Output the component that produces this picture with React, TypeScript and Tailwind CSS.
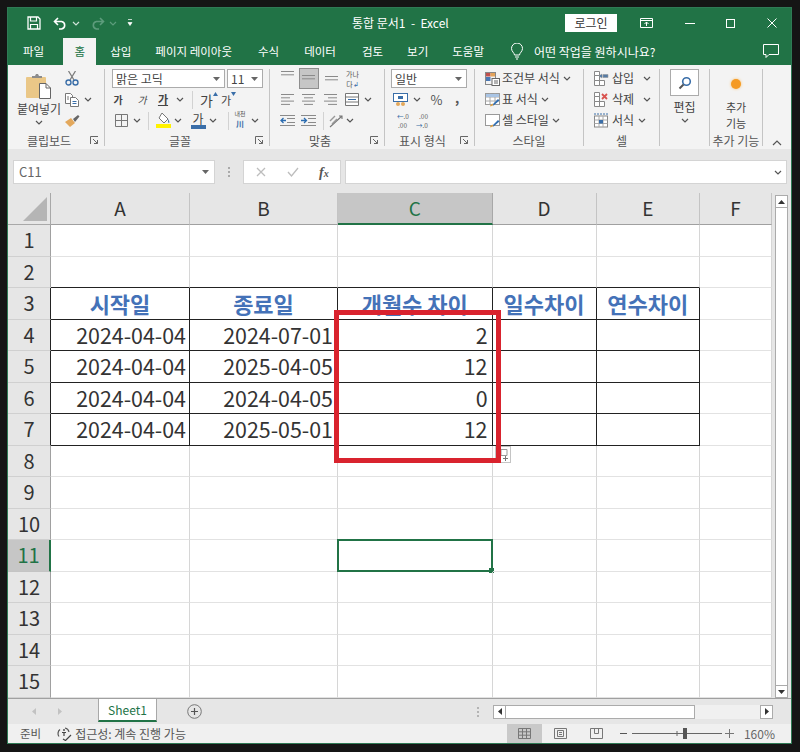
import type { ReactNode } from "react"

const GREEN = "#217346"

function Chev({ className = "", color = "#555" }: { className?: string; color?: string }) {
    return (
        <svg width="8" height="5" viewBox="0 0 8 5" className={`shrink-0 ${className}`}>
            <path d="M1 1l3 3 3-3" fill="none" stroke={color} strokeWidth="1.2" />
        </svg>
    )
}

function Tri({ className = "" }: { className?: string }) {
    return (
        <svg width="7" height="4" viewBox="0 0 7 4" className={`shrink-0 ${className}`}>
            <path d="M0 0h7L3.5 4z" fill="#666" />
        </svg>
    )
}

function Launcher() {
    return (
        <svg width="9" height="9" viewBox="0 0 9 9" className="shrink-0">
            <path d="M.5 8V.5H8M3 3l4.500 4.500M7.500 4v3.500H4" fill="none" stroke="#666" strokeWidth="1" />
        </svg>
    )
}

function Sep({ className = "" }: { className?: string }) {
    return <div className={`w-px h-[18px] bg-[#d2d2d2] shrink-0 ${className}`} />
}

function Group({ label, launcher, className, children }: { label?: string; launcher?: boolean; className: string; children: ReactNode }) {
    return (
        <>
            <div className={`flex flex-col shrink-0 ${className}`}>
                <div className="h-[63px] flex flex-col">{children}</div>
                <div className="h-[18px] pt-px flex items-center text-[12px] text-[#555]">
                    <span className="flex-1 text-center whitespace-nowrap">{label}</span>
                    {launcher && <span className="w-[14px] flex"><Launcher /></span>}
                </div>
            </div>
            <div className="w-px h-[77px] mt-[1px] bg-[#c4c4c4] shrink-0" />
        </>
    )
}

function Row({ children }: { children: ReactNode }) {
    return <div className="h-[21px] flex items-center shrink-0">{children}</div>
}

function Lines({ rows, className = "" }: { rows: [number, number][]; className?: string }) {
    return (
        <svg width="14" height="11" viewBox="0 0 14 11" className={`shrink-0 ${className}`}>
            {rows.map(([x, w], i) => (
                <rect key={i} x={x} y={i * 3.3} width={w} height="1" fill="#8a8a8a" />
            ))}
        </svg>
    )
}

function Indent({ dir, className = "" }: { dir: "in" | "out"; className?: string }) {
    return (
        <svg width="15" height="11" viewBox="0 0 15 11" className={`shrink-0 ${className}`}>
            <path d="M0 .5h15M0 10.500h15M7 3.500h8M7 7.500h8" stroke="#8a8a8a" strokeWidth="1" />
            {dir === "out"
                ? <path d="M6 5.500H1M3.500 3L1 5.500 3.500 8" fill="none" stroke="#2b6cb0" strokeWidth="1.300" />
                : <path d="M0 5.500h5M3 3l2.500 2.500L3 8" fill="none" stroke="#2b6cb0" strokeWidth="1.300" />}
        </svg>
    )
}

function TableIcon({ kind, className = "" }: { kind: "cond" | "table" | "cell"; className?: string }) {
    return (
        <svg width="15" height="14" viewBox="0 0 15 14" className={`shrink-0 ${className}`}>
            {kind === "cond" ? (
                <>
                    <rect x=".5" y=".5" width="5" height="4" fill="#c0504d" />
                    <rect x=".5" y="5" width="5" height="4" fill="#4a78b5" />
                    <rect x="5.500" y=".5" width="5" height="4" fill="#e3a35a" />
                    <rect x=".5" y=".5" width="10" height="12" fill="none" stroke="#888" />
                    <rect x="7" y="6.500" width="7.500" height="7" fill="#fff" stroke="#666" />
                    <path d="M9 9h4M9 11h4" stroke="#666" />
                </>
            ) : (
                <>
                    <rect x=".5" y=".5" width="14" height="11" fill="#fff" stroke="#999" />
                    {kind === "table" && <path d="M5 .5v11M10 .5v11M.5 4h14M.5 8h14" stroke="#aaa" />}
                    {kind === "table" && <rect x="1" y="1" width="13" height="3" fill="#a9c4e4" />}
                    <path d="M7 12l6-6 1.500 1.500-6 5z" fill="#2f6db0" />
                    <path d="M5 12.500l2.500-2 1 1.500-3 1.500z" fill="#e0a040" />
                </>
            )}
        </svg>
    )
}

function CellIcon({ kind, className = "" }: { kind: "insert" | "delete" | "format"; className?: string }) {
    return (
        <svg width="15" height="15" viewBox="0 0 15 15" className={`shrink-0 ${className}`}>
            {kind === "format" ? (
                <>
                    <rect x=".5" y="3" width="13" height="11" fill="#fff" stroke="#888" />
                    <path d="M5 3v11M9 3v11M.5 7h13M.5 10.500h13" stroke="#aaa" />
                    <rect x="5" y="7" width="4" height="3.500" fill="#3a6ea8" />
                    <path d="M0 1h14" stroke="#3a6ea8" strokeDasharray="2 1" />
                </>
            ) : (
                <>
                    <path d="M.5.5h5v4h-5zM.5 4.500h5v5h-5zM.5 9.500h5v5h-5zM5.500 9.500h5v5h-5z" fill="#fff" stroke="#888" />
                    {kind === "insert"
                        ? <path d="M8 5h6M5 5l3-2v4zM9 3.500h5v3H9z" fill="#3a6ea8" stroke="#9a9a9a" strokeWidth=".6" />
                        : <path d="M8 2l5 5M13 2L8 7" stroke="#d9534f" strokeWidth="1.800" />}
                </>
            )}
        </svg>
    )
}

function SmallIcons() {
    return (
        <div className="flex flex-col ml-[4px]">
            <Row>
                <svg width="14" height="15" viewBox="0 0 14 15" className="shrink-0">
                    <path d="M3.500 0l5.500 9M10.500 0L5 9" stroke="#7d7d7d" strokeWidth="1.300" />
                    <circle cx="3.500" cy="11.500" r="2.500" fill="none" stroke="#3a6ea8" strokeWidth="1.400" />
                    <circle cx="10.500" cy="11.500" r="2.500" fill="none" stroke="#3a6ea8" strokeWidth="1.400" />
                </svg>
            </Row>
            <Row>
                <svg width="14" height="14" viewBox="0 0 14 14" className="shrink-0">
                    <path d="M.5.5h5l2 2v8h-7z" fill="#fff" stroke="#777" />
                    <path d="M5.500 4.500h5l3 3v6h-8z" fill="#fff" stroke="#777" />
                    <path d="M7.500 8.500h4M7.500 10.500h4" stroke="#3a6ea8" />
                    <path d="M2 4h2M2 6h2" stroke="#777" />
                </svg>
                <Chev className="ml-[5px]" />
            </Row>
            <Row>
                <svg width="15" height="14" viewBox="0 0 15 14" className="shrink-0">
                    <path d="M0 8l6-4 4 5-5 4z" fill="#e3a85c" />
                    <path d="M8 5l5-4 1.500 1.500L10 8z" fill="#666" />
                </svg>
            </Row>
        </div>
    )
}

function Paste() {
    return (
        <div className="flex flex-col items-center ml-[9px] w-[44px]">
            <svg width="26" height="26" viewBox="0 0 26 26" className="mt-[5px] shrink-0">
                <rect x="0" y="4" width="20" height="21" rx="1" fill="#eac787" />
                <path d="M6 5V3h3l1-2h2l1 2h3v2z" fill="#8c8c8c" />
                <path d="M13.500 10.500h6.500l4.500 4.500v10.500h-11z" fill="#fff" stroke="#666" />
                <path d="M20 10.500v4.500h4.500" fill="none" stroke="#666" />
            </svg>
            <span className="text-[12px] leading-[14px] mt-[3px] text-[#444] whitespace-nowrap">붙여넣기</span>
            <Chev className="mt-[4px]" />
        </div>
    )
}

function Combo({ text, className }: { text: string; className: string }) {
    return (
        <div className={`h-[19px] bg-white border border-[#ababab] flex items-center pl-[3px] pr-[4px] text-[12px] text-[#444] shrink-0 ${className}`}>
            <span className="flex-1 whitespace-nowrap">{text}</span>
            <Tri />
        </div>
    )
}

function FontGroup() {
    return (
        <Group label="글꼴" launcher className="w-[164px]">
            <Row>
                <Combo text="맑은 고딕" className="ml-[7px] w-[113px]" />
                <Combo text="11" className="ml-[2px] w-[36px]" />
            </Row>
            <Row>
                <span className="w-[24px] ml-px text-center text-[10px] font-bold text-[#444]">가</span>
                <span className="w-[24px] text-center text-[10px] italic text-[#444]">가</span>
                <span className="w-[18px] text-center text-[11px] font-bold text-[#444] underline">가</span>
                <span className="w-[16px] flex justify-center"><Chev /></span>
                <Sep className="ml-[4px]" />
                <div className="w-[28px] flex justify-center items-start shrink-0 pl-[4px]">
                    <span className="text-[14px] leading-none text-[#444]">가</span>
                    <svg width="5" height="4" viewBox="0 0 5 4" className="shrink-0 -mt-[1px]"><path d="M2.500 0L5 4H0z" fill="#3a6ea8" /></svg>
                </div>
                <div className="w-[14px] flex justify-center items-start shrink-0 pl-[1px]">
                    <span className="text-[11px] leading-none text-[#444] mt-[2px]">가</span>
                    <svg width="5" height="4" viewBox="0 0 5 4" className="shrink-0 -mt-[1px]"><path d="M0 0h5L2.500 4z" fill="#3a6ea8" /></svg>
                </div>
            </Row>
            <Row>
                <svg width="13" height="13" viewBox="0 0 13 13" className="shrink-0 ml-[10px]">
                    <path d="M.5.5h12v12H.500zM6.500.5v12M.5 6.500h12" fill="none" stroke="#777" />
                </svg>
                <Chev className="ml-[5px]" />
                <Sep className="ml-[7px]" />
                <div className="w-[16px] ml-[6px] flex flex-col items-center shrink-0">
                    <svg width="13" height="11" viewBox="0 0 13 11">
                        <path d="M5 0l6 6-4 4-5-5z" fill="#fff" stroke="#777" />
                        <path d="M11 6c1 2 2 3 1 4-1 0-1-2-1-4z" fill="#3a6ea8" />
                    </svg>
                    <div className="w-[15px] h-[4px] bg-[#fff200]" />
                </div>
                <Chev className="ml-[3px]" />
                <div className="w-[16px] ml-[8px] flex flex-col items-center shrink-0">
                    <span className="text-[12px] leading-[12px] text-[#444]">가</span>
                    <div className="w-[15px] h-[4px] bg-[#3a6ea8]" />
                </div>
                <Chev className="ml-[3px]" />
                <Sep className="ml-[11px]" />
                <div className="w-[16px] ml-[3px] -mt-[2px] flex flex-col items-center shrink-0 leading-none">
                    <span className="text-[6px] leading-[9px] text-[#555] whitespace-nowrap">내천</span>
                    <span className="text-[8px] leading-[12px] font-bold text-[#3a6ea8]">川</span>
                </div>
                <Chev className="ml-[3px]" />
            </Row>
        </Group>
    )
}

function AlignGroup() {
    return (
        <Group label="맞춤" launcher className="w-[114px]">
            <Row>
                <Lines rows={[[0, 13], [0, 13]]} className="ml-[11px] -mt-[5px]" />
                <div className="w-[20px] h-[21px] ml-[4px] bg-[#c6c6c6] border border-[#8e8e8e] flex items-center justify-center shrink-0">
                    <Lines rows={[[0, 13], [0, 13]]} className="mt-[3px]" />
                </div>
                <Lines rows={[[0, 13], [0, 13]]} className="ml-[6px] mt-[6px]" />
                <div className="ml-[7px] flex flex-col items-center shrink-0 text-[#555]">
                    <span className="text-[7px] leading-[10px]">가나</span>
                    <span className="text-[7px] leading-[10px]">다<span className="text-[#3a6ea8]">↲</span></span>
                </div>
            </Row>
            <Row>
                <Lines rows={[[0, 13], [0, 9], [0, 13], [0, 9]]} className="ml-[11px]" />
                <Lines rows={[[0, 13], [2, 9], [0, 13], [2, 9]]} className="ml-[7px]" />
                <Lines rows={[[0, 13], [4, 9], [0, 13], [4, 9]]} className="ml-[8px]" />
                <svg width="14" height="13" viewBox="0 0 14 13" className="shrink-0 ml-[7px]">
                    <path d="M.5.5h13v12H.500zM.5 4h13M.5 9h13" fill="#fff" stroke="#777" />
                    <path d="M3 6.500h8" stroke="#3a6ea8" />
                </svg>
                <Chev className="ml-[5px]" />
            </Row>
            <Row>
                <Indent dir="out" className="ml-[10px]" />
                <Indent dir="in" className="ml-[6px]" />
                <Sep className="ml-[7px]" />
                <svg width="14" height="14" viewBox="0 0 14 14" className="shrink-0 ml-[5px]">
                    <path d="M1 13L13 2M10 2h3v3" fill="none" stroke="#777" strokeWidth="1.100" />
                    <path d="M1 7l5-5M3 10l5-5" stroke="#999" strokeWidth="1.400" />
                </svg>
                <Chev className="ml-[3px]" />
            </Row>
        </Group>
    )
}

function NumberGroup() {
    return (
        <Group label="표시 형식" launcher className="w-[89px]">
            <Row>
                <Combo text="일반" className="ml-[6px] w-[76px]" />
            </Row>
            <Row>
                <svg width="15" height="14" viewBox="0 0 15 14" className="shrink-0 ml-[8px]">
                    <rect x=".5" y=".5" width="14" height="8" fill="#fff" stroke="#3a6ea8" />
                    <rect x="5" y="3" width="5" height="3" fill="#3a6ea8" />
                    <circle cx="5" cy="11" r="2" fill="#e3a85c" />
                    <circle cx="10" cy="11" r="2" fill="#e3a85c" />
                </svg>
                <Chev className="ml-[5px]" />
                <span className="ml-[9px] w-[13px] text-[13px] leading-none text-[#555] text-center">%</span>
                <span className="ml-[10px] w-[8px] text-[13px] leading-none font-bold text-[#555] text-center -mt-[4px]">,</span>
            </Row>
            <Row>
                <div className="ml-[12px] flex flex-col text-[6.5px] leading-[9px] text-[#666] shrink-0 w-[12px]">
                    <span className="whitespace-nowrap"><span className="text-[#3a6ea8]">←</span>.0</span>
                    <span className="pl-[1px]">.00</span>
                </div>
                <div className="ml-[7px] flex flex-col text-[6.5px] leading-[9px] text-[#666] shrink-0 w-[13px]">
                    <span className="pl-[3px]">.00</span>
                    <span className="whitespace-nowrap"><span className="text-[#3a6ea8]">→</span>.0</span>
                </div>
            </Row>
        </Group>
    )
}

function StyleGroup() {
    const items: { kind: "cond" | "table" | "cell"; text: string }[] = [
        { kind: "cond", text: "조건부 서식" },
        { kind: "table", text: "표 서식" },
        { kind: "cell", text: "셀 스타일" },
    ]
    return (
        <Group label="스타일" className="w-[108px]">
            {items.map((it) => (
                <Row key={it.text}>
                    <TableIcon kind={it.kind} className="ml-[10px]" />
                    <span className="ml-[2px] -mt-px text-[12px] text-[#444] whitespace-nowrap">{it.text}</span>
                    <Chev className="ml-[3px]" />
                </Row>
            ))}
        </Group>
    )
}

function CellGroup() {
    return (
        <Group label="셀" className="w-[75px]">
            <Row>
                <CellIcon kind="insert" className="ml-[10px]" />
                <span className="ml-[3px] -mt-px text-[12px] text-[#444] whitespace-nowrap">삽입</span>
                <Chev className="ml-[9px]" />
            </Row>
            <Row>
                <CellIcon kind="delete" className="ml-[10px]" />
                <span className="ml-[3px] -mt-px text-[12px] text-[#444] whitespace-nowrap">삭제</span>
                <Chev className="ml-[9px]" />
            </Row>
            <Row>
                <CellIcon kind="format" className="ml-[10px]" />
                <span className="ml-[3px] -mt-px text-[12px] text-[#444] whitespace-nowrap">서식</span>
                <Chev className="ml-[4px]" />
            </Row>
        </Group>
    )
}

function Ribbon() {
    return (
        <div className="h-[84px] bg-[#f3f3f3] flex pt-[3px] shrink-0">
            <Group label="클립보드" launcher className="w-[96px]">
                <div className="flex">
                    <Paste />
                    <SmallIcons />
                </div>
            </Group>
            <FontGroup />
            <AlignGroup />
            <NumberGroup />
            <StyleGroup />
            <CellGroup />
            <Group className="w-[49px]">
                <div className="flex flex-col items-center">
                    <div className="w-[29px] h-[27px] mt-[1px] bg-white border border-[#ababab] flex items-center justify-center">
                        <svg width="14" height="14" viewBox="0 0 14 14">
                            <circle cx="8.500" cy="5.500" r="3.800" fill="none" stroke="#3a6ea8" strokeWidth="1.600" />
                            <path d="M5.500 8.500L1.500 12.500" stroke="#555" strokeWidth="2" />
                        </svg>
                    </div>
                    <span className="text-[12px] leading-[14px] mt-[4px] text-[#444]">편집</span>
                    <Chev className="mt-[4px]" />
                </div>
            </Group>
            <Group label="추가 기능" className="w-[52px]">
                <div className="flex flex-col items-center text-[11px] leading-[16px] text-[#444]">
                    <div className="w-[10px] h-[10px] mt-[11px] rounded-full bg-[#f59a23] shadow-[0_0_3px_#f8c070]" />
                    <span className="mt-[10px]">추가</span>
                    <span>기능</span>
                </div>
            </Group>
            <div className="flex-1 flex items-end justify-center pb-[3px]">
                <svg width="10" height="6" viewBox="0 0 10 6">
                    <path d="M1 5l4-4 4 4" fill="none" stroke="#555" strokeWidth="1.200" />
                </svg>
            </div>
        </div>
    )
}

function TitleBar() {
    return (
        <div className="h-[30px] flex items-center text-white shrink-0" style={{ backgroundColor: GREEN }}>
            <svg width="14" height="14" viewBox="0 0 14 14" className="ml-[19px] shrink-0">
                <path d="M1 1h10l2 2v10H1z" fill="none" stroke="#fff" strokeWidth="1.300" />
                <path d="M3.500 1v4h6V1M3.500 13V8.500h7V13" fill="none" stroke="#fff" strokeWidth="1.200" />
            </svg>
            <svg width="14" height="13" viewBox="0 0 14 13" className="ml-[12px] shrink-0">
                <path d="M5 1L1.500 4.500 5 8M2 4.500h6.500a3.800 3.800 0 0 1 0 7.500H6" fill="none" stroke="#fff" strokeWidth="1.600" />
            </svg>
            <Chev className="ml-[5px]" color="#cfe3d8" />
            <svg width="14" height="13" viewBox="0 0 14 13" className="ml-[11px] shrink-0">
                <path d="M9 1l3.500 3.500L9 8M12 4.500H5.500a3.800 3.800 0 0 0 0 7.500H8" fill="none" stroke="#5d9c7c" strokeWidth="1.600" />
            </svg>
            <Chev className="ml-[4px]" color="#5d9c7c" />
            <svg width="6" height="8" viewBox="0 0 6 8" className="ml-[10px] shrink-0">
                <path d="M1 .5h4M1 3.500h4L3 6.500z" fill="#fff" stroke="#fff" strokeWidth=".7" />
            </svg>
            <span className="ml-[219px] text-[12px] whitespace-pre w-[213px]">통합 문서1  -  Excel</span>
            <div className="w-[52px] h-[18px] bg-white text-[#333] text-[12px] flex items-center justify-center shrink-0">로그인</div>
            <svg width="13" height="10" viewBox="0 0 13 10" className="ml-[23px] shrink-0">
                <path d="M.5.5h12v9H.500zM.5 2.500h12M6.500 8V4M4.500 6l2-2 2 2" fill="none" stroke="#fff" />
            </svg>
            <div className="w-[10px] h-px bg-white ml-[32px] shrink-0" />
            <div className="w-[9px] h-[9px] border border-white ml-[31px] shrink-0" />
            <svg width="10" height="10" viewBox="0 0 10 10" className="ml-[32px] shrink-0">
                <path d="M.5.5l9 9M9.500.5l-9 9" stroke="#fff" />
            </svg>
        </div>
    )
}

function TabRow() {
    return (
        <div className="h-[27px] flex text-white text-[11.5px] shrink-0" style={{ backgroundColor: GREEN }}>
            <span className="ml-[15px] self-center">파일</span>
            <span className="ml-[19px] w-[33px] bg-[#f3f3f3] text-[#217346] flex items-center justify-center">홈</span>
            <span className="ml-[14px] self-center">삽입</span>
            <span className="ml-[24px] self-center whitespace-nowrap">페이지 레이아웃</span>
            <span className="ml-[26px] self-center">수식</span>
            <span className="ml-[25px] self-center">데이터</span>
            <span className="ml-[26px] self-center">검토</span>
            <span className="ml-[24px] self-center">보기</span>
            <span className="ml-[24px] self-center">도움말</span>
            <svg width="14" height="17" viewBox="0 0 14 17" className="ml-[26px] self-center shrink-0">
                <path d="M4.500 12c0-2-3-3.500-3-6.500a5.500 5.500 0 0 1 11 0c0 3-3 4.500-3 6.500zM5 14h4M6 16h2" fill="none" stroke="#fff" />
            </svg>
            <span className="ml-[10px] self-center text-[12px] whitespace-nowrap">어떤 작업을 원하시나요?</span>
            <svg width="16" height="15" viewBox="0 0 16 15" className="ml-auto mr-[12px] self-center shrink-0">
                <path d="M.5.5h15v10H6l-3 3v-3H.500z" fill="none" stroke="#fff" />
            </svg>
        </div>
    )
}

function FormulaBar() {
    return (
        <div className="h-[44px] bg-[#e6e6e6] flex items-start pt-[11px] pl-[5px] shrink-0">
            <div className="w-[202px] h-[24px] bg-white border border-[#d4d4d4] flex items-center pl-[5px] pr-[5px] text-[13px] text-[#666] shrink-0">
                <span className="flex-1">C11</span>
                <Tri />
            </div>
            <div className="w-[28px] h-[24px] flex flex-col items-center justify-center gap-[2px] shrink-0">
                <div className="w-[2px] h-[2px] bg-[#aaa]" />
                <div className="w-[2px] h-[2px] bg-[#aaa]" />
                <div className="w-[2px] h-[2px] bg-[#aaa]" />
            </div>
            <div className="w-[98px] h-[24px] bg-white border border-[#d4d4d4] flex items-center shrink-0">
                <svg width="10" height="10" viewBox="0 0 10 10" className="ml-[12px] shrink-0">
                    <path d="M1 1l8 8M9 1l-8 8" stroke="#bdbdbd" strokeWidth="1.300" />
                </svg>
                <svg width="12" height="10" viewBox="0 0 12 10" className="ml-[21px] shrink-0">
                    <path d="M1 5l3.500 4L11 1" fill="none" stroke="#bdbdbd" strokeWidth="1.300" />
                </svg>
                <span className="ml-[20px] font-['Liberation_Serif',serif] italic font-bold text-[14px] text-[#555]">f<span className="text-[10px]">x</span></span>
            </div>
            <div className="w-[442px] h-[24px] ml-[4px] bg-white border border-[#d4d4d4] flex items-center justify-end pr-[4px] shrink-0">
                <Chev />
            </div>
        </div>
    )
}

const COLS = ["A", "B", "C", "D", "E", "F"]
const DATA: Record<number, string[]> = {
    3: ["시작일", "종료일", "개월수 차이", "일수차이", "연수차이"],
    4: ["2024-04-04", "2024-07-01", "2", "", ""],
    5: ["2024-04-04", "2025-04-05", "12", "", ""],
    6: ["2024-04-04", "2024-04-05", "0", "", ""],
    7: ["2024-04-04", "2025-05-01", "12", "", ""],
}

function GridCell({ r, c }: { r: number; c: number }) {
    const inTable = r >= 3 && r <= 7 && c < 5
    const right = inTable ? "border-r-[#222]" : "border-r-[#d6d6d6]"
    const bottom = r >= 2 && r <= 7 && c < 5 ? "border-b-[#222]" : "border-b-[#e2e2e2]"
    const text = DATA[r]?.[c] ?? ""
    const align = r === 3
        ? "justify-center font-bold text-[22px] text-[#4472b8]"
        : c === 0 ? "justify-end pr-[3px] text-[21.4px] text-[#333]" : "justify-end pr-[4px] text-[21.4px] text-[#333]"
    return (
        <div className={`relative flex items-center whitespace-nowrap border-r border-b ${right} ${bottom} ${align}`}>
            {text}
            {r === 11 && c === 2 && (
                <div className="absolute -left-px -top-px -right-px -bottom-px border-2 border-[#217346]">
                    <div className="absolute -right-[3px] -bottom-[3px] w-[5px] h-[5px] bg-[#217346] border-0" />
                </div>
            )}
        </div>
    )
}

function Sheet() {
    const rows = Array.from({ length: 16 }, (_, i) => i + 1)
    return (
        <div className="relative w-[764px] h-[506px] overflow-hidden bg-white border-b border-[#a0a0a0] shrink-0">
            <div className="grid grid-cols-[43px_139px_148px_154.5px_104px_103.5px_72px] grid-rows-[32px] auto-rows-[31.5px]">
                <div className="bg-[#e6e6e6] border-r border-b border-[#a8a8a8] flex items-end justify-end pr-[3px] pb-[3px]">
                    <svg width="24" height="24" viewBox="0 0 24 24">
                        <path d="M24 0v24H0z" fill="#b5b5b5" />
                    </svg>
                </div>
                {COLS.map((col, i) => (
                    <div
                        key={col}
                        className={
                            i === 2
                                ? "bg-[#c6c6c6] border-b-2 border-b-[#217346] border-r border-r-[#a8a8a8] flex items-center justify-center text-[19px] text-[#217346]"
                                : "bg-[#e6e6e6] border-b border-b-[#a0a0a0] border-r border-r-[#c4c4c4] flex items-center justify-center text-[19px] text-[#333]"
                        }
                    >
                        {col}
                    </div>
                ))}
                {rows.map((r) => (
                    <div key={r} className="contents">
                        <div
                            className={
                                r === 11
                                    ? "bg-[#c6c6c6] border-r-2 border-r-[#217346] border-b border-b-[#c4c4c4] flex items-center justify-center text-[20px] text-[#217346]"
                                    : `bg-[#e6e6e6] border-r border-b border-b-[#d0d0d0] flex items-center justify-center text-[20px] text-[#333] ${r >= 3 && r <= 7 ? "border-r-[#222]" : "border-r-[#a0a0a0]"}`
                            }
                        >
                            {r < 16 ? r : ""}
                        </div>
                        {COLS.map((_, c) => (
                            <GridCell key={c} r={r} c={c} />
                        ))}
                    </div>
                ))}
            </div>
            {/* paste options and the red callout lie over the cells */}
            <div className="absolute left-[487px] top-[253px] w-[16px] h-[17px] bg-white border border-[#c4c4c4] flex items-end justify-end p-px">
                <svg width="8" height="13" viewBox="0 0 8 13">
                    <path d="M0 1.500h6v6H0z" fill="none" stroke="#999" />
                    <path d="M2 10.500h5M4.500 8v5" stroke="#777" />
                </svg>
            </div>
            <div className="absolute left-[326px] top-[117px] w-[167px] h-[153px] border-[5px] border-[#d9232e]" />
        </div>
    )
}

function VScroll() {
    return (
        <div className="w-[19px] h-[506px] bg-[#e6e6e6] flex flex-col items-center pt-[2px] shrink-0 border-b border-[#a0a0a0]">
            <div className="w-[13px] h-[13px] bg-white border border-[#ababab] flex items-center justify-center shrink-0">
                <svg width="7" height="4" viewBox="0 0 7 4"><path d="M3.500 0L7 4H0z" fill="#333" /></svg>
            </div>
            <div className="w-[13px] flex-1 bg-white border-x border-[#ababab]" />
            <div className="w-[13px] h-[13px] bg-white border border-[#ababab] flex items-center justify-center shrink-0">
                <svg width="7" height="4" viewBox="0 0 7 4"><path d="M0 0h7L3.500 4z" fill="#333" /></svg>
            </div>
        </div>
    )
}

function ScrollBtn({ dir }: { dir: "l" | "r" }) {
    return (
        <div className="w-[13px] h-[14px] bg-white border border-[#ababab] flex items-center justify-center shrink-0">
            <svg width="4" height="7" viewBox="0 0 4 7">
                <path d={dir === "l" ? "M4 0v7L0 3.500z" : "M0 0v7l4-3.500z"} fill="#333" />
            </svg>
        </div>
    )
}

function TabBar() {
    return (
        <div className="h-[25px] bg-[#e6e6e6] flex items-center shrink-0">
            <svg width="4" height="7" viewBox="0 0 4 7" className="ml-[24px] shrink-0"><path d="M4 0v7L0 3.500z" fill="#c2c2c2" /></svg>
            <svg width="4" height="7" viewBox="0 0 4 7" className="ml-[22px] shrink-0"><path d="M0 0v7l4-3.500z" fill="#c2c2c2" /></svg>
            <div className="ml-[36px] w-[59px] h-[23px] self-start bg-white border-x border-x-[#a8a8a8] border-b-2 border-b-[#217346] text-[12px] text-[#217346] flex items-center justify-center shrink-0">
                Sheet1
            </div>
            <svg width="15" height="15" viewBox="0 0 15 15" className="ml-[30px] shrink-0">
                <circle cx="7.500" cy="7.500" r="6.800" fill="none" stroke="#777" />
                <path d="M7.500 4v7M4 7.500h7" stroke="#555" strokeWidth="1.200" />
            </svg>
            <div className="ml-[275px] w-[2px] flex flex-col gap-[2px] shrink-0">
                <div className="h-[2px] bg-[#b4b4b4]" />
                <div className="h-[2px] bg-[#b4b4b4]" />
                <div className="h-[2px] bg-[#b4b4b4]" />
            </div>
            <div className="ml-[14px] flex">
                <ScrollBtn dir="l" />
                <div className="w-[189px] h-[14px] bg-white border-y border-r border-[#ababab]" />
                <div className="w-[65px] h-[14px] bg-[#f0f0f0]" />
                <ScrollBtn dir="r" />
            </div>
        </div>
    )
}

function StatusBar() {
    return (
        <div className="h-[19px] bg-[#f0f0f0] flex items-center text-[12px] text-[#555] shrink-0">
            <span className="ml-[12px] text-[11.5px]">준비</span>
            <svg width="15" height="14" viewBox="0 0 15 14" className="ml-[16px] shrink-0">
                <path d="M3 2.500a5 5 0 0 0-1 7M8 1a5 5 0 0 1 4 4" fill="none" stroke="#555" strokeWidth="1.200" />
                <circle cx="7" cy="3" r="1" fill="#555" />
                <path d="M5 5.500h4M7 5.500V9M6 12l2.500 1.500L14 8" fill="none" stroke="#444" strokeWidth="1.200" />
            </svg>
            <span className="ml-[3px] whitespace-nowrap">접근성: 계속 진행 가능</span>
            <div className="ml-auto flex items-center h-full pr-[16px]">
                <div className="w-[35px] h-full bg-[#c9c9c9] flex items-center justify-center shrink-0">
                    <svg width="13" height="11" viewBox="0 0 13 11">
                        <path d="M.5.5h12v10H.500zM4.500.5v10M8.500.5v10M.5 3.800h12M.5 7.200h12" fill="none" stroke="#777" />
                    </svg>
                </div>
                <svg width="13" height="11" viewBox="0 0 13 11" className="ml-[12px] shrink-0">
                    <path d="M.5.5h12v10H.500zM3.500 2.500h6v6h-6zM5 4.500h3M5 6.500h3" fill="none" stroke="#777" />
                </svg>
                <svg width="13" height="11" viewBox="0 0 13 11" className="ml-[23px] shrink-0">
                    <path d="M.5.5h12v10H.500zM4.500.5v5h4v-5" fill="none" stroke="#777" />
                </svg>
                <div className="ml-[17px] w-[7px] h-px bg-[#555] shrink-0" />
                <svg width="90" height="11" viewBox="0 0 90 11" className="ml-[5px] shrink-0">
                    <path d="M0 5.500h90" stroke="#666" />
                    <path d="M45 3v5" stroke="#666" />
                    <rect x="51" y="0" width="4" height="11" fill="#555" />
                </svg>
                <svg width="9" height="9" viewBox="0 0 9 9" className="ml-[3px] shrink-0">
                    <path d="M0 4.500h9M4.500 0v9" stroke="#777" />
                </svg>
                <span className="ml-[10px] text-[#666]">160%</span>
            </div>
        </div>
    )
}

export default function App() {
    return (
        <div className="w-[800px] h-[752px] bg-[#151515] pt-[7px] pl-[7px] overflow-hidden font-['Noto_Sans_CJK_KR','Noto_Sans',sans-serif]">
            <div className="w-[785px] h-[737px] border border-[#2f7a55] flex flex-col bg-[#e6e6e6]">
                <TitleBar />
                <TabRow />
                <Ribbon />
                <FormulaBar />
                <div className="flex shrink-0">
                    <Sheet />
                    <VScroll />
                </div>
                <TabBar />
                <StatusBar />
            </div>
        </div>
    )
}
